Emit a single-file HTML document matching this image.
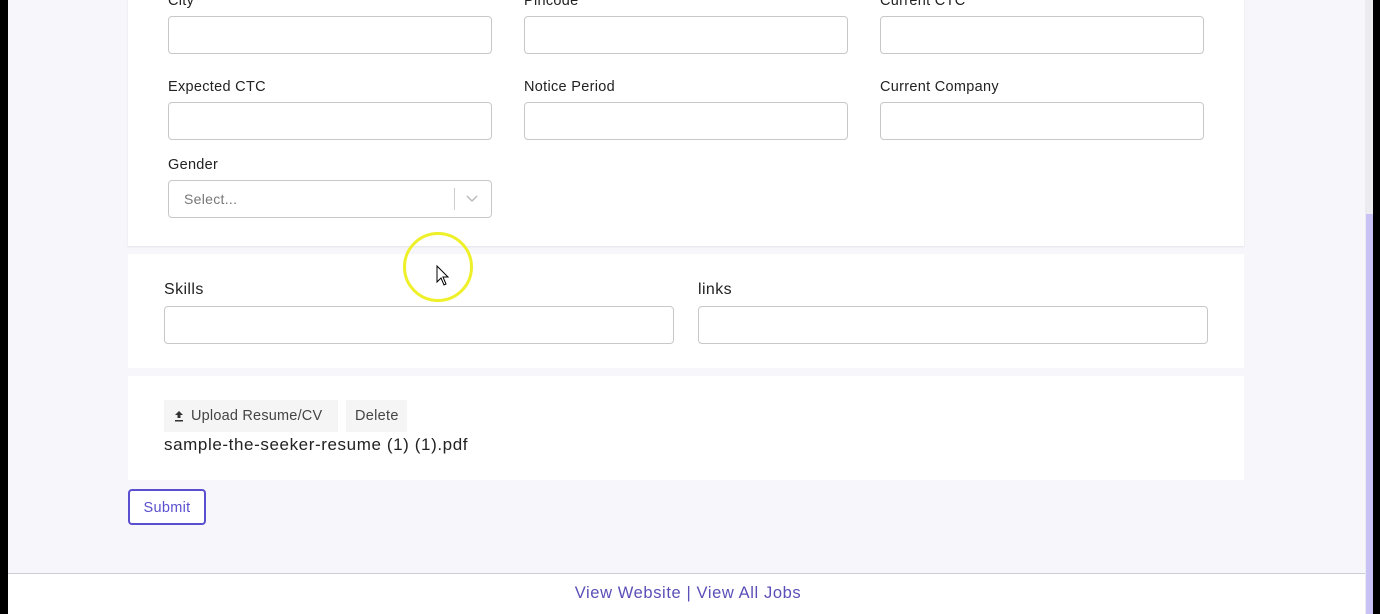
<!DOCTYPE html>
<html><head><meta charset="utf-8"><style>
*{box-sizing:border-box;margin:0;padding:0}
body{width:1380px;height:614px;overflow:hidden;background:#f7f7fb;font-family:"Liberation Sans",sans-serif;color:#222;position:relative}
.a{position:absolute}
.card{position:absolute;background:#fff;left:128px;width:1116px}
.lbl{position:absolute;font-size:14.5px;color:#222;letter-spacing:0.3px}
.inp{position:absolute;height:38px;border:1px solid #c8c8c8;border-radius:4px;background:#fff}
</style></head><body>
<div class="a" style="left:0;top:0;width:8px;height:614px;background:#000"></div>
<div class="a" style="left:1373px;top:0;width:7px;height:614px;background:#000"></div>
<div class="a" style="left:1365px;top:0;width:8px;height:614px;background:#ececf0"></div>
<div class="a" style="left:1366px;top:214px;width:7px;height:400px;background:#c9c3f5"></div>

<div class="card" style="top:-20px;height:266px;box-shadow:0 1px 2px rgba(0,0,0,.08)"></div>
<div class="lbl" style="left:168px;top:-7px">City</div>
<div class="lbl" style="left:524px;top:-7px">Pincode</div>
<div class="lbl" style="left:880px;top:-7px">Current CTC</div>
<div class="inp" style="left:168px;top:16px;width:324px"></div>
<div class="inp" style="left:524px;top:16px;width:324px"></div>
<div class="inp" style="left:880px;top:16px;width:324px"></div>
<div class="lbl" style="left:168px;top:79px">Expected CTC</div>
<div class="lbl" style="left:524px;top:79px">Notice Period</div>
<div class="lbl" style="left:880px;top:79px">Current Company</div>
<div class="inp" style="left:168px;top:102px;width:324px"></div>
<div class="inp" style="left:524px;top:102px;width:324px"></div>
<div class="inp" style="left:880px;top:102px;width:324px"></div>
<div class="lbl" style="left:168px;top:157px">Gender</div>
<div class="inp" style="left:168px;top:180px;width:324px"></div>
<div class="a" style="left:184px;top:191px;font-size:14px;color:#777;letter-spacing:0.3px">Select...</div>
<div class="a" style="left:454px;top:188px;width:1px;height:22px;background:#ccc"></div>
<svg class="a" style="left:465px;top:194px" width="14" height="10"><path d="M2 2l5 5 5-5" stroke="#bbb" stroke-width="1.5" fill="none"/></svg>

<div class="card" style="top:254px;height:114px"></div>
<div class="a" style="left:164px;top:281px;font-size:16px;letter-spacing:0.4px">Skills</div>
<div class="a" style="left:698px;top:281px;font-size:16px;letter-spacing:0.4px">links</div>
<div class="inp" style="left:164px;top:306px;width:510px"></div>
<div class="inp" style="left:698px;top:306px;width:510px"></div>

<div class="card" style="top:376px;height:104px"></div>
<div class="a" style="left:164px;top:400px;width:174px;height:32px;background:#f5f5f5"></div>
<svg class="a" style="left:174px;top:410px" width="10" height="12"><path d="M5 1L1 5h2.5v3h3V5H9z M1 10h8v1.5H1z" fill="#333"/></svg>
<div class="a" style="left:191px;top:408px;font-size:14.5px;color:#444;letter-spacing:0.2px">Upload Resume/CV</div>
<div class="a" style="left:346px;top:400px;width:61px;height:32px;background:#f5f5f5"></div>
<div class="a" style="left:355px;top:408px;font-size:14.5px;color:#444;letter-spacing:0.3px">Delete</div>
<div class="a" style="left:164px;top:435px;font-size:17px;color:#222;letter-spacing:0.6px">sample-the-seeker-resume (1) (1).pdf</div>

<div class="a" style="left:128px;top:489px;width:78px;height:36px;border:2px solid #5a4fcf;border-radius:4px;background:#fff;color:#5a4fcf;font-size:14.5px;text-align:center;line-height:34px;letter-spacing:0.3px">Submit</div>

<div class="a" style="left:8px;top:573px;width:1357px;height:41px;background:#fff;border-top:1px solid #ccccd6"></div>
<div class="a" style="left:0;top:584px;width:1376px;text-align:center;font-size:16.5px;color:#5a4fb8;letter-spacing:0.6px">View Website | View All Jobs</div>

<div class="a" style="left:403px;top:232px;width:70px;height:70px;border:3px solid #eef02a;border-radius:50%"></div>
<svg class="a" style="left:436px;top:265px" width="14" height="22"><path d="M1 1v16l4-4 3 7 2-1-3-7h5z" fill="#fff" stroke="#000" stroke-width="1"/></svg>
</body></html>
